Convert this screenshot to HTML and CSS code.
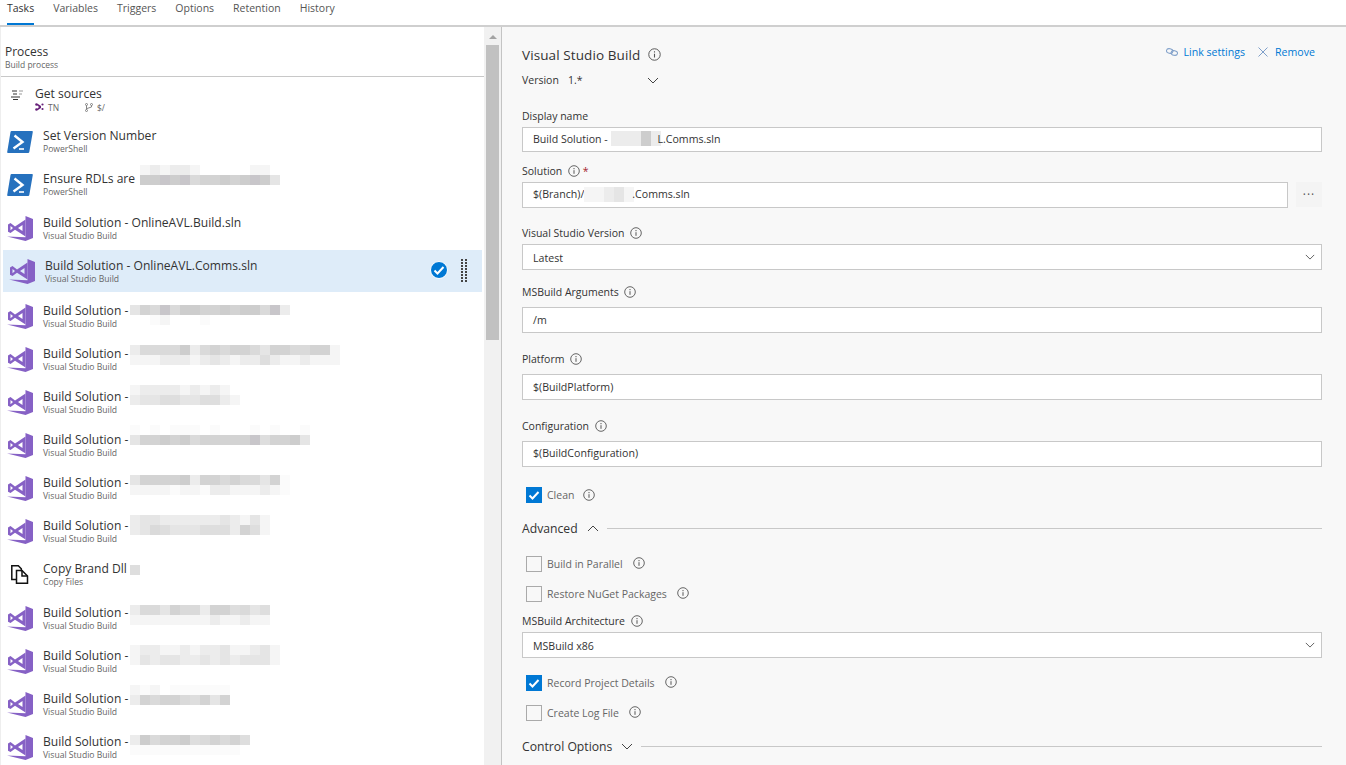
FILE: index.html
```html
<!DOCTYPE html>
<html lang="en">
<head>
<meta charset="utf-8">
<title>Build definition</title>
<link rel="stylesheet" href="styles.css">
</head>
<body>
<svg class="defs" width="0" height="0" aria-hidden="true">
  <symbol id="vs" viewBox="0 0 26 25">
    <path fill="#8661c5" d="M18.500 0 26 3v19l-7.500 3L0 20.500l18.500.8z"/>
    <path fill="#8661c5" fill-rule="evenodd" d="M1 8.500 3.500 7 8 10.500 18.500 3.500v17L8 13.700 3.500 17 1 15.700zM3.500 10v4.200L6 12zM11 12l4.500 3V9z"/>
  </symbol>
  <symbol id="ps" viewBox="0 0 26 22">
    <path fill="#2671be" d="M4.500 0H25q1 0 .8 1L22.300 21q-.2 1-1.200 1H1q-1 0-.8-1L3.500 1q.2-1 1-1z"/>
    <path fill="none" stroke="#fff" stroke-width="2.400" d="m7.500 4.500 8 6.500-9 6.500"/>
    <path stroke="#fff" stroke-width="1.600" d="M12 18h5"/>
  </symbol>
  <symbol id="info" viewBox="0 0 12 12">
    <circle cx="6" cy="6" r="5.300" fill="none" stroke="#555" stroke-width=".9"/>
    <path stroke="#555" stroke-width="1" d="M6 5.200v3.600M6 3v1.200"/>
  </symbol>
  <symbol id="chev" viewBox="0 0 12 7">
    <path fill="none" stroke="#444" stroke-width="1" d="m1 1 5 5 5-5"/>
  </symbol>
  <symbol id="tick" viewBox="0 0 16 16">
    <path fill="none" stroke="#fff" stroke-width="2" d="m3.500 8.500 3 3 6-6.500"/>
  </symbol>
</svg>

<nav class="tabs">
  <a class="tab active">Tasks</a>
  <a class="tab">Variables</a>
  <a class="tab">Triggers</a>
  <a class="tab">Options</a>
  <a class="tab">Retention</a>
  <a class="tab">History</a>
</nav>

<main class="layout">
  <section class="left">
    <div class="list">
      <header class="process">
        <div class="process-name">Process</div>
        <div class="process-sub">Build process</div>
      </header>

      <div class="sources">
        <svg class="sources-icon" viewBox="0 0 12 10" width="12" height="10"><path stroke="#333" stroke-width="1" d="M1 1h5M2 4h4M0 7h9M2 9.500h5"/><path stroke="#999" stroke-width="1" d="M8 1h4M8 4h3"/></svg>
        <div class="text">
          <div class="name">Get sources</div>
          <div class="meta">
            <svg viewBox="0 0 9 8" width="9" height="8"><g fill="#68217a"><circle cx="1.500" cy="1.500" r="1.300"/><circle cx="1.500" cy="6.500" r="1.300"/><circle cx="7.500" cy="1.500" r="1.100"/><circle cx="7.500" cy="6" r="1.100"/><path d="M1 1h2l3 2v2L3 7H1l3-3z"/></g></svg>
            <span class="meta-a">TN</span>
            <svg viewBox="0 0 8 9" width="8" height="9"><g fill="none" stroke="#777" stroke-width=".9"><circle cx="1.500" cy="1.500" r="1"/><circle cx="6.500" cy="1.500" r="1"/><circle cx="1.500" cy="7.500" r="1"/><path d="M1.500 2.500v4M6.500 2.500V4L2 5.500"/></g></svg>
            <span>$/</span>
          </div>
        </div>
      </div>

      <div class="task">
        <svg class="ticon ps"><use href="#ps"/></svg>
        <div class="text"><div class="name">Set Version Number</div><div class="sub">PowerShell</div></div>
      </div>

      <div class="task">
        <svg class="ticon ps"><use href="#ps"/></svg>
        <div class="text"><div class="name">Ensure RDLs are</div><div class="sub">PowerShell</div></div>
        <div class="blur t2">
          <div class="br"><i></i><i class="k"></i><i class="j"></i><i class="k"></i><i class="j"></i><i class="j"></i><i class="k"></i><i></i><i></i><i></i><i></i><i></i><i class="k"></i><i class="k"></i></div>
          <div class="br"><i></i><i class="e"></i><i class="e"></i><i class="f"></i><i class="e"></i><i class="f"></i><i class="c"></i><i class="d"></i><i class="d"></i><i class="e"></i><i class="d"></i><i class="e"></i><i class="f"></i><i class="e"></i><i class="b"></i></div>
        </div>
      </div>

      <div class="task nudge">
        <svg class="ticon vs"><use href="#vs"/></svg>
        <div class="text"><div class="name">Build Solution - OnlineAVL.Build.sln</div><div class="sub">Visual Studio Build</div></div>
      </div>

      <div class="task selected">
        <svg class="ticon vs"><use href="#vs"/></svg>
        <div class="text"><div class="name">Build Solution - OnlineAVL.Comms.sln</div><div class="sub">Visual Studio Build</div></div>
        <span class="badge"><svg viewBox="0 0 16 16" width="16" height="16"><use href="#tick"/></svg></span>
        <span class="grip"></span>
      </div>

      <div class="task">
        <svg class="ticon vs"><use href="#vs"/></svg>
        <div class="text"><div class="name">Build Solution -</div><div class="sub">Visual Studio Build</div></div>
        <div class="blur t10">
          <div class="br"><i class="b"></i><i class="d"></i><i class="c"></i><i class="f"></i><i class="c"></i><i class="e"></i><i class="e"></i><i class="d"></i><i class="d"></i><i class="e"></i><i class="d"></i><i class="e"></i><i class="e"></i><i class="c"></i><i class="f"></i><i class="j"></i></div>
          <div class="br"><i></i><i></i><i class="l"></i><i class="k"></i><i></i><i></i><i></i><i class="l"></i></div>
        </div>
      </div>

      <div class="task">
        <svg class="ticon vs"><use href="#vs"/></svg>
        <div class="text"><div class="name">Build Solution -</div><div class="sub">Visual Studio Build</div></div>
        <div class="blur t7">
          <div class="br"><i class="j"></i><i class="c"></i><i class="c"></i><i class="c"></i><i class="c"></i><i class="e"></i><i class="j"></i><i class="c"></i><i class="d"></i><i class="c"></i><i class="d"></i><i class="d"></i><i class="c"></i><i class="b"></i><i class="d"></i><i class="d"></i><i class="c"></i><i class="c"></i><i class="d"></i><i class="d"></i><i class="k"></i></div>
          <div class="br"><i class="k"></i><i class="k"></i><i class="k"></i><i class="j"></i><i class="j"></i><i class="j"></i><i class="k"></i><i class="j"></i><i class="b"></i><i class="j"></i><i class="k"></i><i class="j"></i><i class="j"></i><i class="a"></i><i class="j"></i><i class="k"></i><i class="k"></i><i class="j"></i><i class="k"></i><i class="k"></i><i class="k"></i></div>
        </div>
      </div>

      <div class="task">
        <svg class="ticon vs"><use href="#vs"/></svg>
        <div class="text"><div class="name">Build Solution -</div><div class="sub">Visual Studio Build</div></div>
        <div class="blur t4">
          <div class="br"><i class="k"></i><i class="j"></i><i class="j"></i><i class="j"></i><i class="j"></i><i class="k"></i><i class="j"></i><i class="k"></i><i class="j"></i><i class="k"></i></div>
          <div class="br"><i class="j"></i><i class="b"></i><i class="b"></i><i class="a"></i><i class="a"></i><i class="b"></i><i class="b"></i><i class="a"></i><i class="a"></i><i class="j"></i><i class="k"></i></div>
        </div>
      </div>

      <div class="task">
        <svg class="ticon vs"><use href="#vs"/></svg>
        <div class="text"><div class="name">Build Solution -</div><div class="sub">Visual Studio Build</div></div>
        <div class="blur t1">
          <div class="br"><i class="l"></i><i></i><i class="l"></i><i></i><i class="l"></i><i class="l"></i><i class="l"></i><i></i><i class="l"></i><i></i><i></i><i></i><i class="l"></i><i></i><i class="l"></i><i></i><i></i><i class="l"></i></div>
          <div class="br"><i class="b"></i><i class="d"></i><i class="d"></i><i class="e"></i><i class="d"></i><i class="e"></i><i class="c"></i><i class="d"></i><i class="d"></i><i class="d"></i><i class="d"></i><i class="d"></i><i class="f"></i><i class="a"></i><i class="d"></i><i class="d"></i><i class="e"></i><i class="b"></i></div>
        </div>
      </div>

      <div class="task">
        <svg class="ticon vs"><use href="#vs"/></svg>
        <div class="text"><div class="name">Build Solution -</div><div class="sub">Visual Studio Build</div></div>
        <div class="blur t8">
          <div class="br"><i class="b"></i><i class="d"></i><i class="d"></i><i class="d"></i><i class="d"></i><i class="e"></i><i class="j"></i><i class="d"></i><i class="d"></i><i class="c"></i><i class="d"></i><i class="c"></i><i class="c"></i><i class="b"></i><i class="d"></i><i class="l"></i></div>
          <div class="br"><i class="k"></i><i class="k"></i><i class="k"></i><i class="k"></i><i class="l"></i><i class="k"></i><i class="k"></i><i class="l"></i><i class="j"></i><i class="j"></i><i class="k"></i><i class="k"></i><i class="k"></i><i class="j"></i><i class="k"></i><i class="l"></i></div>
        </div>
      </div>

      <div class="task">
        <svg class="ticon vs"><use href="#vs"/></svg>
        <div class="text"><div class="name">Build Solution -</div><div class="sub">Visual Studio Build</div></div>
        <div class="blur t5">
          <div class="br"><i class="j"></i><i class="b"></i><i class="b"></i><i class="j"></i><i class="j"></i><i class="j"></i><i class="j"></i><i class="j"></i><i class="j"></i><i class="b"></i><i class="j"></i><i class="k"></i><i class="b"></i><i class="k"></i></div>
          <div class="br"><i class="j"></i><i class="b"></i><i class="c"></i><i class="a"></i><i class="b"></i><i class="b"></i><i class="b"></i><i class="a"></i><i class="a"></i><i class="a"></i><i class="j"></i><i class="d"></i><i class="a"></i><i class="k"></i></div>
        </div>
      </div>

      <div class="task copy">
        <svg class="ticon doc" viewBox="0 0 18 19" width="18" height="19"><g fill="none" stroke="#111" stroke-width="1.500"><path d="M5.500 14.500H.8V.8h6.500l3 3v2.500"/><path d="M5.500 5.500H11l5.500 5.500v7.200H5.500z"/><path d="M11 5.500V11h5.500"/></g></svg>
        <div class="text"><div class="name">Copy Brand Dll</div><div class="sub">Copy Files</div></div>
        <div class="blur t2"><div class="br"><i></i></div><div class="br"><i class="a"></i></div></div>
      </div>

      <div class="task nudge">
        <svg class="ticon vs"><use href="#vs"/></svg>
        <div class="text"><div class="name">Build Solution -</div><div class="sub">Visual Studio Build</div></div>
        <div class="blur t8">
          <div class="br"><i class="j"></i><i class="c"></i><i class="c"></i><i class="b"></i><i class="d"></i><i class="c"></i><i class="c"></i><i class="j"></i><i class="d"></i><i class="d"></i><i class="a"></i><i class="c"></i><i class="b"></i><i class="a"></i></div>
          <div class="br"><i class="k"></i><i class="k"></i><i class="k"></i><i class="k"></i><i class="k"></i><i class="k"></i><i class="k"></i><i class="k"></i><i class="j"></i><i class="k"></i><i class="k"></i><i class="j"></i><i class="k"></i><i class="k"></i></div>
        </div>
      </div>

      <div class="task">
        <svg class="ticon vs"><use href="#vs"/></svg>
        <div class="text"><div class="name">Build Solution -</div><div class="sub">Visual Studio Build</div></div>
        <div class="blur t5">
          <div class="br"><i class="k"></i><i class="j"></i><i class="j"></i><i class="k"></i><i class="k"></i><i class="j"></i><i class="k"></i><i class="j"></i><i class="j"></i><i class="b"></i><i class="k"></i><i class="k"></i><i class="j"></i><i class="b"></i><i class="k"></i></div>
          <div class="br"><i class="k"></i><i class="b"></i><i class="j"></i><i class="b"></i><i class="b"></i><i class="j"></i><i class="j"></i><i class="b"></i><i class="j"></i><i class="b"></i><i class="j"></i><i class="b"></i><i class="b"></i><i class="b"></i><i class="k"></i></div>
        </div>
      </div>

      <div class="task">
        <svg class="ticon vs"><use href="#vs"/></svg>
        <div class="text"><div class="name">Build Solution -</div><div class="sub">Visual Studio Build</div></div>
        <div class="blur t2">
          <div class="br"><i class="k"></i><i class="l"></i><i class="k"></i><i></i><i class="l"></i><i class="l"></i><i class="l"></i><i class="l"></i><i class="l"></i><i class="l"></i></div>
          <div class="br"><i class="j"></i><i class="d"></i><i class="c"></i><i class="d"></i><i class="d"></i><i class="c"></i><i class="a"></i><i class="d"></i><i class="b"></i><i class="d"></i></div>
        </div>
      </div>

      <div class="task">
        <svg class="ticon vs"><use href="#vs"/></svg>
        <div class="text"><div class="name">Build Solution -</div><div class="sub">Visual Studio Build</div></div>
        <div class="blur t9">
          <div class="br"><i class="j"></i><i class="e"></i><i class="c"></i><i class="d"></i><i class="d"></i><i class="e"></i><i class="a"></i><i class="c"></i><i class="d"></i><i class="c"></i><i class="d"></i><i class="a"></i></div>
          <div class="br"><i class="l"></i><i class="l"></i><i class="l"></i><i class="l"></i><i class="l"></i><i class="l"></i><i class="l"></i><i class="l"></i><i class="l"></i><i class="l"></i><i class="l"></i></div>
        </div>
      </div>
    </div>

    <div class="scrollbar">
      <span class="scroll-arrow"></span>
      <span class="scroll-thumb"></span>
    </div>
  </section>

  <section class="right">
    <div class="head">
      <div class="head-left">
        <div class="title-row">
          <h2 class="title">Visual Studio Build</h2>
          <svg class="info title-info"><use href="#info"/></svg>
        </div>
        <div class="version">
          <span class="version-label">Version</span>
          <span class="version-value">1.*</span>
          <svg class="chev" width="12" height="7"><use href="#chev"/></svg>
        </div>
      </div>
      <div class="actions">
        <a class="action">
          <svg viewBox="0 0 12 8" width="12" height="8"><g fill="none" stroke="#7f9fc9" stroke-width="1"><ellipse cx="3.700" cy="3" rx="3.200" ry="2.300" transform="rotate(10 3.700 3)"/><ellipse cx="8.300" cy="5" rx="3.200" ry="2.300" transform="rotate(10 8.300 5)"/></g></svg>
          Link settings
        </a>
        <a class="action">
          <svg class="x" viewBox="0 0 10 10" width="10" height="10"><path fill="none" stroke="#7f9fc9" stroke-width="1" d="m.5.500 9 9M9.500.500l-9 9"/></svg>
          Remove
        </a>
      </div>
    </div>

    <div class="field f-display">
      <label class="label">Display name</label>
      <div class="input h25 lift">Build Solution - <span class="mask m-a"><i class="j"></i><i class="j"></i><i class="j"></i><i class="e"></i><i class="j"></i></span>L.Comms.sln</div>
    </div>

    <div class="field f-solution">
      <label class="label">Solution <svg class="info"><use href="#info"/></svg> <em class="req">*</em></label>
      <div class="row-input">
        <div class="input lift">$(Branch)/<span class="mask m-b"><i class="k"></i><i class="k"></i><i class="j"></i><i class="b"></i><i class="k"></i></span>.Comms.sln</div>
        <button class="dots">···</button>
      </div>
    </div>

    <div class="field f-vsv">
      <label class="label">Visual Studio Version <svg class="info"><use href="#info"/></svg></label>
      <div class="input select drop">Latest<svg class="chev" width="10" height="6"><use href="#chev"/></svg></div>
    </div>

    <div class="field f-args">
      <label class="label">MSBuild Arguments <svg class="info"><use href="#info"/></svg></label>
      <div class="input">/m</div>
    </div>

    <div class="field f-plat">
      <label class="label">Platform <svg class="info"><use href="#info"/></svg></label>
      <div class="input">$(BuildPlatform)</div>
    </div>

    <div class="field f-plat">
      <label class="label">Configuration <svg class="info"><use href="#info"/></svg></label>
      <div class="input lift">$(BuildConfiguration)</div>
    </div>

    <div class="check c-clean">
      <span class="box on"><svg viewBox="0 0 16 16" width="16" height="16"><use href="#tick"/></svg></span>
      <span class="check-label">Clean</span>
      <svg class="info plain"><use href="#info"/></svg>
    </div>

    <div class="section s-adv">
      <span class="section-name">Advanced</span>
      <svg class="chev up" width="12" height="7"><use href="#chev"/></svg>
      <span class="rule"></span>
    </div>

    <div class="check c-par">
      <span class="box"></span>
      <span class="check-label">Build in Parallel</span>
      <svg class="info raised"><use href="#info"/></svg>
    </div>

    <div class="check c-nuget">
      <span class="box"></span>
      <span class="check-label">Restore NuGet Packages</span>
      <svg class="info raised"><use href="#info"/></svg>
    </div>

    <div class="field f-arch">
      <label class="label">MSBuild Architecture <svg class="info"><use href="#info"/></svg></label>
      <div class="input select drop">MSBuild x86<svg class="chev" width="10" height="6"><use href="#chev"/></svg></div>
    </div>

    <div class="check c-record">
      <span class="box on"><svg viewBox="0 0 16 16" width="16" height="16"><use href="#tick"/></svg></span>
      <span class="check-label">Record Project Details</span>
      <svg class="info raised"><use href="#info"/></svg>
    </div>

    <div class="check c-nuget">
      <span class="box"></span>
      <span class="check-label">Create Log File</span>
      <svg class="info raised"><use href="#info"/></svg>
    </div>

    <div class="section s-ctrl">
      <span class="section-name">Control Options</span>
      <svg class="chev" width="12" height="7"><use href="#chev"/></svg>
      <span class="rule"></span>
    </div>
  </section>
</main>
</body>
</html>
```
FILE: styles.css
```css
* { box-sizing: border-box; }
html, body { height: 100%; }
body {
  margin: 0;
  height: 765px;
  overflow: hidden;
  background: #fff;
  color: #333;
  font-family: "Open Sans", "Noto Sans", "Liberation Sans", sans-serif;
  font-size: 10.500px;
  display: flex;
  flex-direction: column;
}
.defs { position: absolute; }

/* tabs */
.tabs {
  display: flex;
  gap: 19px;
  height: 27px;
  padding-left: 7px;
  border-bottom: 2px solid #cfcfcf;
  flex: none;
}
.tab {
  height: 25px;
  line-height: 16px;
  font-size: 10.500px;
  color: #555;
  border-bottom: 2px solid transparent;
}
.tab.active { color: #333; border-bottom-color: #0078d4; }

.layout { display: flex; flex: 1; min-height: 0; }

/* left */
.left {
  width: 502px;
  flex: none;
  display: flex;
  border-right: 1px solid #c4c4c4;
  border-left: 1px solid #eee;
  overflow: hidden;
}
.list { flex: 1; min-width: 0; }
.process {
  height: 50px;
  padding: 16px 0 0 4px;
  border-bottom: 1px solid #c8c8c8;
}
.process-name { font-size: 12px; line-height: 17px; color: #333; }
.process-sub { font-size: 8.500px; line-height: 9px; color: #666; }

.sources {
  height: 43px;
  display: flex;
  padding: 1px 0 0 10px;
}
.sources-icon { margin-top: 12px; flex: none; }
.sources .text { margin-left: 12px; }
.meta { display: flex; align-items: center; gap: 4px; height: 10px; font-size: 8.500px; color: #666; }
.meta-a { width: 33px; }

.task {
  position: relative;
  height: 43px;
  display: flex;
  padding-left: 6px;
}
.nudge { margin-top: 1px; }
.ticon { flex: none; margin-top: 11px; }
.ps { width: 26px; height: 22px; }
.vs { width: 26px; height: 25px; margin-top: 9px; }
.doc { margin: 12px 4px 0 4px; }
.text { margin-left: 10px; padding-top: 8px; }
.name { font-size: 12.100px; line-height: 16px; color: #333; white-space: nowrap; }
.sub { font-size: 8.600px; line-height: 10px; color: #666; white-space: nowrap; }

.selected {
  margin: 0 2px 3px 2px;
  height: 42px;
  padding-left: 6px;
  background: #deecf9;
}
.badge {
  position: absolute;
  left: 427px;
  top: 11px;
  width: 18px;
  height: 18px;
  border-radius: 50%;
  background: #0078d4;
  border: 1px solid #fff;
  display: flex;
  align-items: center;
  justify-content: center;
}
.grip {
  position: absolute;
  left: 458px;
  top: 9px;
  width: 6px;
  height: 24px;
  background-image: radial-gradient(circle at 1px 1px, #444 1px, transparent 1px);
  background-size: 4px 3px;
}

/* redacted blocks, snapped to a 10px mosaic */
.blur { position: absolute; left: 129px; display: flex; flex-direction: column; }
.t1 { top: 1px; }
.t2 { top: 2px; }
.t4 { top: 4px; }
.t5 { top: 5px; }
.t7 { top: 7px; }
.t8 { top: 8px; }
.t9 { top: 9px; }
.t10 { top: 10px; }
.br { display: flex; height: 10px; }
.br i, .mask i { display: block; width: 10px; height: 100%; }
.a { background: #dedede; }
.b { background: #e5e5e5; }
.c { background: #dadada; }
.d { background: #d3d3d3; }
.e { background: #cdcdcd; }
.f { background: #c8c6ca; }
.j { background: #ececec; }
.k { background: #f5f5f5; }
.l { background: #fbfbfb; }

/* scrollbar */
.scrollbar {
  width: 17px;
  flex: none;
  background: #f1f1f1;
  display: flex;
  flex-direction: column;
  align-items: center;
  padding-top: 8px;
  gap: 6px;
}
.scroll-arrow {
  width: 0;
  height: 0;
  border-left: 4px solid transparent;
  border-right: 4px solid transparent;
  border-bottom: 4px solid #a3a3a3;
}
.scroll-thumb { width: 13px; height: 295px; background: #c1c1c1; flex: none; }

/* right */
.right {
  flex: 1;
  min-width: 0;
  background: #f8f8f8;
  padding: 0 24px 0 20px;
}
.head { display: flex; justify-content: space-between; height: 65px; padding-top: 18px; }
.title-row { display: flex; align-items: center; height: 20px; gap: 8px; }
.title { margin: 0; font-size: 13.500px; font-weight: 400; color: #333; letter-spacing: .1px; }
.info { width: 12px; height: 12px; flex: none; vertical-align: -2px; margin-left: 3px; }
.title-info { width: 13px; height: 13px; margin: -2px 0 0; }
.version { display: flex; align-items: center; margin-top: 7px; height: 16px; }
.version-label { width: 46px; }
.version-value { width: 79px; }

.actions { display: flex; gap: 13px; margin-top: -1px; height: 16px; padding-right: 7px; }
.action { display: flex; align-items: center; gap: 6px; font-size: 10.600px; color: #0078d4; }
.x { margin-right: 1px; }

.field { margin-top: 18px; }
.f-display { margin-top: 16px; }
.f-solution { margin-top: 11px; }
.f-vsv { margin-top: 17px; }
.f-args { margin-top: 14px; }
.f-arch { margin-top: 11px; }
.f-display .label, .f-solution .label, .f-vsv .label, .f-arch .label { margin-bottom: 3px; }
.label { display: block; height: 16px; line-height: 16px; margin-bottom: 7px; font-size: 10.500px; color: #333; white-space: nowrap; }
.req { color: #a4262c; font-style: normal; }
.input {
  height: 26px;
  padding: 0 0 0 10px;
  background: #fff;
  border: 1px solid #c8c8c8;
  font-size: 10.600px;
  color: #333;
  display: flex;
  align-items: center;
  white-space: pre;
  flex: 1;
}
.h25 { height: 25px; }
.lift { padding-bottom: 2px; }
.drop { padding-top: 2px; }
.select { position: relative; }
.select .chev { position: absolute; right: 6px; top: 9px; }
.row-input { display: flex; gap: 8px; }
.dots {
  width: 26px;
  height: 25px;
  padding: 0;
  border: 0;
  background: #f4f4f4;
  color: #555;
  font: 12px "Open Sans", sans-serif;
  letter-spacing: 1px;
  flex: none;
}
.mask { display: flex; height: 15px; }
.m-a { margin-right: -3px; }
.m-b { margin-right: -2px; }

.check { display: flex; align-items: center; height: 16px; padding-left: 4px; }
.box {
  width: 16px;
  height: 16px;
  flex: none;
  border: 1px solid #aaa;
  background: #f8f8f8;
  display: block;
}
.box.on { background: #0078d4; border: 0; }
.box svg { display: block; }
.check-label { margin-left: 5px; font-size: 10.500px; color: #666; white-space: nowrap; }
.check .plain { margin-left: 9px; }
.check .raised { margin-top: -3px; margin-left: 10px; }
.c-clean { margin-top: 20px; }
.c-par { margin-top: 18px; }
.c-nuget { margin-top: 14px; }
.c-record { margin-top: 17px; }

.section { display: flex; align-items: center; height: 20px; }
.section-name { font-size: 12.200px; color: #333; }
.section .chev { margin-left: 9px; }
.up { transform: rotate(180deg); }
.rule { flex: 1; height: 1px; margin-left: 8px; background: #c8c8c8; }
.s-adv { margin-top: 15px; }
.s-ctrl { margin-top: 15px; }
```
